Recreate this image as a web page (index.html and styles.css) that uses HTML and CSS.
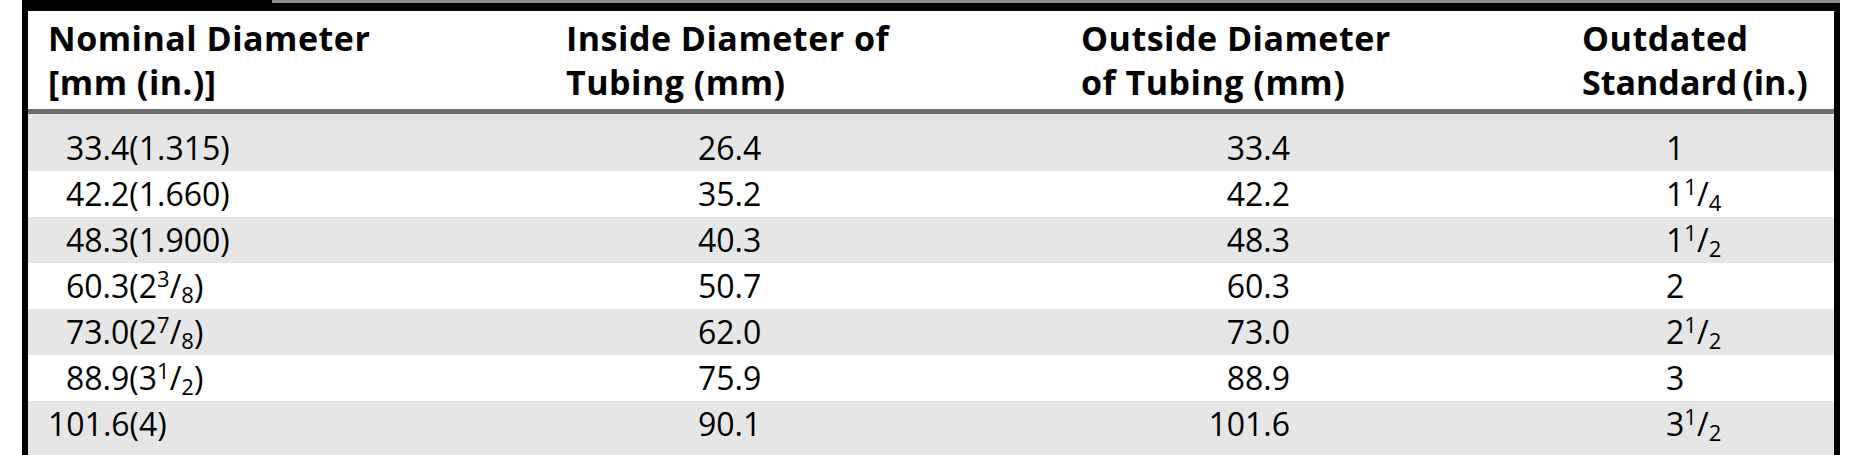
FILE: index.html
```html
<!DOCTYPE html>
<html lang="en">
<head>
<meta charset="utf-8">
<title>Tubing diameters</title>
<link rel="stylesheet" href="styles.css">
</head>
<body>
<div class="frame">
  <div class="topstrip"><span class="ts-black"></span><span class="ts-gray"></span></div>
  <table class="pipe">
    <colgroup>
      <col class="c1"><col class="c2"><col class="c3"><col class="c4">
    </colgroup>
    <thead>
      <tr>
        <th>Nominal Diameter<br>[mm (in.)]</th>
        <th>Inside Diameter of<br>Tubing (mm)</th>
        <th>Outside Diameter<br>of Tubing (mm)</th>
        <th>Outdated<br><span class="tight">Standard (in.)</span></th>
      </tr>
    </thead>
    <tbody>
      <tr class="odd first">
        <td class="nom ind">33.4(1.315)</td><td class="ins">26.4</td><td class="out">33.4</td><td class="std">1</td>
      </tr>
      <tr>
        <td class="nom ind">42.2(1.660)</td><td class="ins">35.2</td><td class="out">42.2</td><td class="std">1<span class="num">1</span>/<span class="den">4</span></td>
      </tr>
      <tr class="odd">
        <td class="nom ind">48.3(1.900)</td><td class="ins">40.3</td><td class="out">48.3</td><td class="std">1<span class="num">1</span>/<span class="den">2</span></td>
      </tr>
      <tr>
        <td class="nom ind">60.3(2<span class="num">3</span>/<span class="den">8</span>)</td><td class="ins">50.7</td><td class="out">60.3</td><td class="std">2</td>
      </tr>
      <tr class="odd">
        <td class="nom ind">73.0(2<span class="num">7</span>/<span class="den">8</span>)</td><td class="ins">62.0</td><td class="out">73.0</td><td class="std">2<span class="num">1</span>/<span class="den">2</span></td>
      </tr>
      <tr>
        <td class="nom ind">88.9(3<span class="num">1</span>/<span class="den">2</span>)</td><td class="ins">75.9</td><td class="out">88.9</td><td class="std">3</td>
      </tr>
      <tr class="odd last">
        <td class="nom">101.6(4)</td><td class="ins">90.1</td><td class="out">101.6</td><td class="std">3<span class="num">1</span>/<span class="den">2</span></td>
      </tr>
    </tbody>
  </table>
</div>
</body>
</html>
```
FILE: styles.css
```css
html, body {
  margin: 0;
  padding: 0;
  background: #ffffff;
}

.frame {
  margin-left: 22px;
  width: 1818px;
  overflow: hidden;
}

.topstrip {
  display: flex;
  height: 3px;
}

.ts-black {
  width: 250px;
  background: #000;
}

.ts-gray {
  flex: 1;
  background: #8a8a8a;
}

.pipe {
  width: 1818px;
  table-layout: fixed;
  border-collapse: separate;
  border-spacing: 0;
  border-left: 6px solid #000;
  border-right: 6px solid #000;
  border-top: 8px solid #000;
  color: #000;
}

.c1 { width: 518px; }
.c2 { width: 515px; }
.c3 { width: 501px; }
.c4 { width: 272px; }

.pipe th {
  font-family: "Open Sans", "DejaVu Sans", sans-serif;
  font-weight: 700;
  font-size: 34px;
  letter-spacing: 0.5px;
  line-height: 44px;
  text-align: left;
  vertical-align: top;
  padding: 5px 0 5px 20px;
  height: 88px;
  border-bottom: 5px solid #6f6f6f;
  white-space: nowrap;
}

.tight {
  letter-spacing: 0;
  word-spacing: -4px;
}

.pipe td {
  font-family: "Open Sans", "Liberation Sans", sans-serif;
  font-size: 32px;
  line-height: 46px;
  height: 46px;
  padding: 0;
  vertical-align: top;
  white-space: nowrap;
}

.pipe tr.odd td {
  background: #e6e6e6;
}

.pipe tr.first td {
  padding-top: 11px;
}

.pipe tr.last td {
  padding-bottom: 12px;
}

.pipe td.nom { padding-left: 20px; }
.pipe td.nom.ind { padding-left: 38px; }
.pipe td.ins { padding-left: 152px; }
.pipe td.out { text-align: right; padding-right: 272px; }
.pipe td.std { padding-left: 104px; }

.num,
.den {
  font-size: 22px;
  line-height: 0;
}

.num {
  vertical-align: 11px;
}

.den {
  vertical-align: -5px;
}
```
